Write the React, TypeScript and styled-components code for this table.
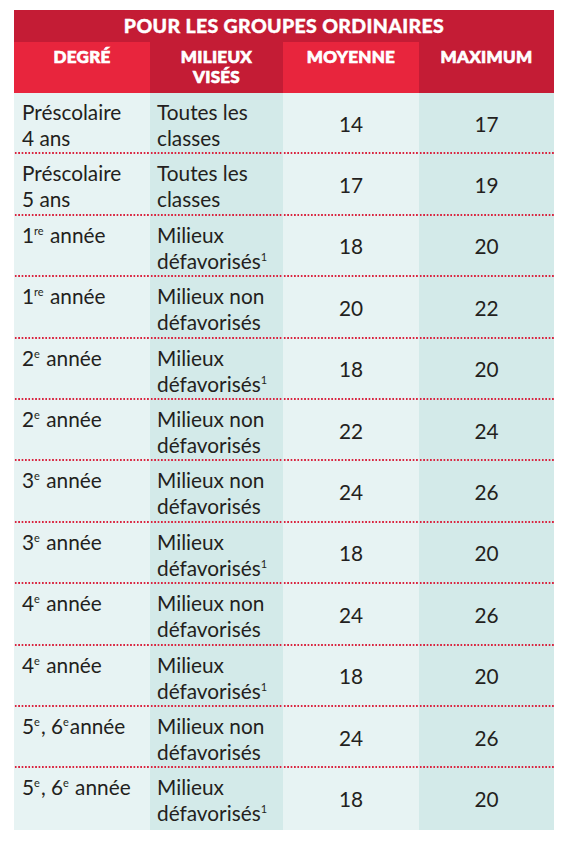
import React from 'react';
import styled, { createGlobalStyle } from 'styled-components';

const GlobalStyle = createGlobalStyle`
  html, body {
    margin: 0;
    padding: 0;
    background: #ffffff;
  }
  body {
    font-family: Lato, "Open Sans", sans-serif;
    color: #231f20;
  }
`;

const Page = styled.div`
  padding: 10px 0 0 14px;
`;

const Table = styled.div`
  width: 540px;
`;

const TitleBar = styled.div`
  height: 32px;
  background: #c41c35;
  color: #ffffff;
  font-weight: 900;
  font-size: 19.5px;
  line-height: 32px;
  text-align: center;
  letter-spacing: 0.35px;
  -webkit-text-stroke: 0.4px #ffffff;
`;

const Grid = styled.div`
  display: grid;
  grid-template-columns: 136px 133px 136px 135px;
`;

const HeadCell = styled.div<{ $dark?: boolean }>`
  height: 51px;
  background: ${({ $dark }) => ($dark ? '#c41c35' : '#e8253d')};
  color: #ffffff;
  font-weight: 900;
  font-size: 17px;
  line-height: 20px;
  text-align: center;
  letter-spacing: 0.3px;
  padding-top: 5px;
  box-sizing: border-box;
  -webkit-text-stroke: 0.7px #ffffff;
`;

const Row = styled.div`
  display: contents;
`;

const Cell = styled.div<{ $dark?: boolean; $center?: boolean; $last?: boolean }>`
  position: relative;
  height: 61.4px;
  box-sizing: border-box;
  background: ${({ $dark }) => ($dark ? '#d3eae9' : '#e7f3f3')};
  font-size: 20.8px;
  line-height: 26px;
  padding: ${({ $center, $dark }) => ($center ? '0' : $dark ? '6px 0 0 7px' : '6px 0 0 8px')};
  display: ${({ $center }) => ($center ? 'flex' : 'block')};
  align-items: center;
  justify-content: center;

  &::after {
    content: ${({ $last }) => ($last ? 'none' : "''")};
    position: absolute;
    left: 0;
    right: 0;
    bottom: 0;
    height: 2px;
    background-image: radial-gradient(circle, #d9243f 0.95px, transparent 1.15px);
    background-size: 3.4px 2px;
  }
`;

const Sup = styled.sup`
  font-size: 11px;
  line-height: 0;
  vertical-align: 8px;
  margin-right: 1px;
`;

type RowData = {
  grade: React.ReactNode;
  milieu: React.ReactNode;
  avg: number;
  max: number;
};

const Defav = () => (
  <>
    Milieux
    <br />
    défavorisés<Sup>1</Sup>
  </>
);

const NonDefav = () => (
  <>
    Milieux non
    <br />
    défavorisés
  </>
);

const rows: RowData[] = [
  { grade: <>Préscolaire<br />4 ans</>, milieu: <>Toutes les<br />classes</>, avg: 14, max: 17 },
  { grade: <>Préscolaire<br />5 ans</>, milieu: <>Toutes les<br />classes</>, avg: 17, max: 19 },
  { grade: <>1<Sup>re</Sup> année</>, milieu: <Defav />, avg: 18, max: 20 },
  { grade: <>1<Sup>re</Sup> année</>, milieu: <NonDefav />, avg: 20, max: 22 },
  { grade: <>2<Sup>e</Sup> année</>, milieu: <Defav />, avg: 18, max: 20 },
  { grade: <>2<Sup>e</Sup> année</>, milieu: <NonDefav />, avg: 22, max: 24 },
  { grade: <>3<Sup>e</Sup> année</>, milieu: <NonDefav />, avg: 24, max: 26 },
  { grade: <>3<Sup>e</Sup> année</>, milieu: <Defav />, avg: 18, max: 20 },
  { grade: <>4<Sup>e</Sup> année</>, milieu: <NonDefav />, avg: 24, max: 26 },
  { grade: <>4<Sup>e</Sup> année</>, milieu: <Defav />, avg: 18, max: 20 },
  { grade: <>5<Sup>e</Sup>, 6<Sup>e</Sup>année</>, milieu: <NonDefav />, avg: 24, max: 26 },
  { grade: <>5<Sup>e</Sup>, 6<Sup>e</Sup> année</>, milieu: <Defav />, avg: 18, max: 20 },
];

export default function App() {
  return (
    <Page>
      <GlobalStyle />
      <Table>
        <TitleBar>POUR LES GROUPES ORDINAIRES</TitleBar>
        <Grid>
          <HeadCell>DEGRÉ</HeadCell>
          <HeadCell $dark>
            MILIEUX
            <br />
            VISÉS
          </HeadCell>
          <HeadCell>MOYENNE</HeadCell>
          <HeadCell $dark>MAXIMUM</HeadCell>
          {rows.map((r, i) => {
            const last = i === rows.length - 1;
            return (
              <Row key={i}>
                <Cell $last={last}>{r.grade}</Cell>
                <Cell $dark $last={last}>{r.milieu}</Cell>
                <Cell $center $last={last}>{r.avg}</Cell>
                <Cell $dark $center $last={last}>{r.max}</Cell>
              </Row>
            );
          })}
        </Grid>
      </Table>
    </Page>
  );
}
